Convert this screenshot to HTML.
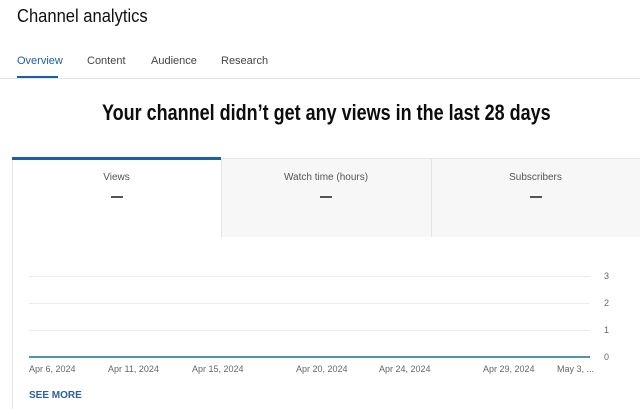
<!DOCTYPE html>
<html><head><style>
*{margin:0;padding:0;box-sizing:border-box}
body{width:640px;height:409px;overflow:hidden;background:#fff;font-family:"Liberation Sans",sans-serif;position:relative}
.a{position:absolute;white-space:nowrap}
.sx{display:inline-block;transform-origin:left top}
</style></head><body>
<div class="a" style="left:17px;top:6px;font-size:18px;color:#111"><span class="sx" style="transform:scaleX(0.92)">Channel analytics</span></div>
<div class="a" style="left:17px;top:55px;font-size:11px;color:#1b5eaa">Overview</div>
<div class="a" style="left:87px;top:55px;font-size:11px;color:#444">Content</div>
<div class="a" style="left:151px;top:55px;font-size:11px;color:#444">Audience</div>
<div class="a" style="left:221px;top:55px;font-size:11px;color:#444">Research</div>
<div class="a" style="left:17px;top:76px;width:41px;height:2px;background:#1b5eaa"></div>
<div class="a" style="left:0;top:78px;width:640px;height:1px;background:#e5e5e5"></div>
<div class="a" style="left:102px;top:100px;font-size:22px;font-weight:bold;color:#0d0d0d"><span class="sx" style="transform:scaleX(0.818)">Your channel didn’t get any views in the last 28 days</span></div>
<div class="a" style="left:12px;top:157px;width:1px;height:252px;background:#e5e5e5"></div>
<div class="a" style="left:221px;top:158px;width:419px;height:79px;background:#f7f7f7;border-left:1px solid #e5e5e5;border-top:1px solid #e5e5e5"></div>
<div class="a" style="left:431px;top:158px;width:1px;height:79px;background:#e5e5e5"></div>
<div class="a" style="left:12px;top:157px;width:209px;height:3px;background:#1b5eaa"></div>
<div class="a" style="left:12px;top:172px;width:209px;text-align:center;font-size:10px;color:#555">Views</div>
<div class="a" style="left:221px;top:172px;width:210px;text-align:center;font-size:10px;color:#555">Watch time (hours)</div>
<div class="a" style="left:431px;top:172px;width:209px;text-align:center;font-size:10px;color:#555">Subscribers</div>
<div class="a" style="left:111px;top:196px;width:12px;height:2px;background:#555"></div>
<div class="a" style="left:320px;top:196px;width:12px;height:2px;background:#555"></div>
<div class="a" style="left:530px;top:196px;width:12px;height:2px;background:#555"></div>
<div class="a" style="left:29px;top:276px;width:561px;height:1px;background:#ececec"></div>
<div class="a" style="left:29px;top:303px;width:561px;height:1px;background:#ececec"></div>
<div class="a" style="left:29px;top:330px;width:561px;height:1px;background:#ececec"></div>
<div class="a" style="left:29px;top:356px;width:561px;height:2px;background:#4a9aa6"></div>
<div class="a" style="left:604px;top:271px;font-size:9px;color:#666">3</div>
<div class="a" style="left:604px;top:298px;font-size:9px;color:#666">2</div>
<div class="a" style="left:604px;top:325px;font-size:9px;color:#666">1</div>
<div class="a" style="left:604px;top:352px;font-size:9px;color:#666">0</div>
<div class="a" style="top:364px;font-size:9px;color:#666;left:29px">Apr 6, 2024</div>
<div class="a" style="top:364px;font-size:9px;color:#666;left:108px">Apr 11, 2024</div>
<div class="a" style="top:364px;font-size:9px;color:#666;left:192px">Apr 15, 2024</div>
<div class="a" style="top:364px;font-size:9px;color:#666;left:296px">Apr 20, 2024</div>
<div class="a" style="top:364px;font-size:9px;color:#666;left:379px">Apr 24, 2024</div>
<div class="a" style="top:364px;font-size:9px;color:#666;left:483px">Apr 29, 2024</div>
<div class="a" style="top:364px;font-size:9px;color:#666;left:557px">May 3, ...</div>
<div class="a" style="left:29px;top:390px;font-size:10px;font-weight:bold;color:#2a5fa0">SEE MORE</div>
</body></html>
